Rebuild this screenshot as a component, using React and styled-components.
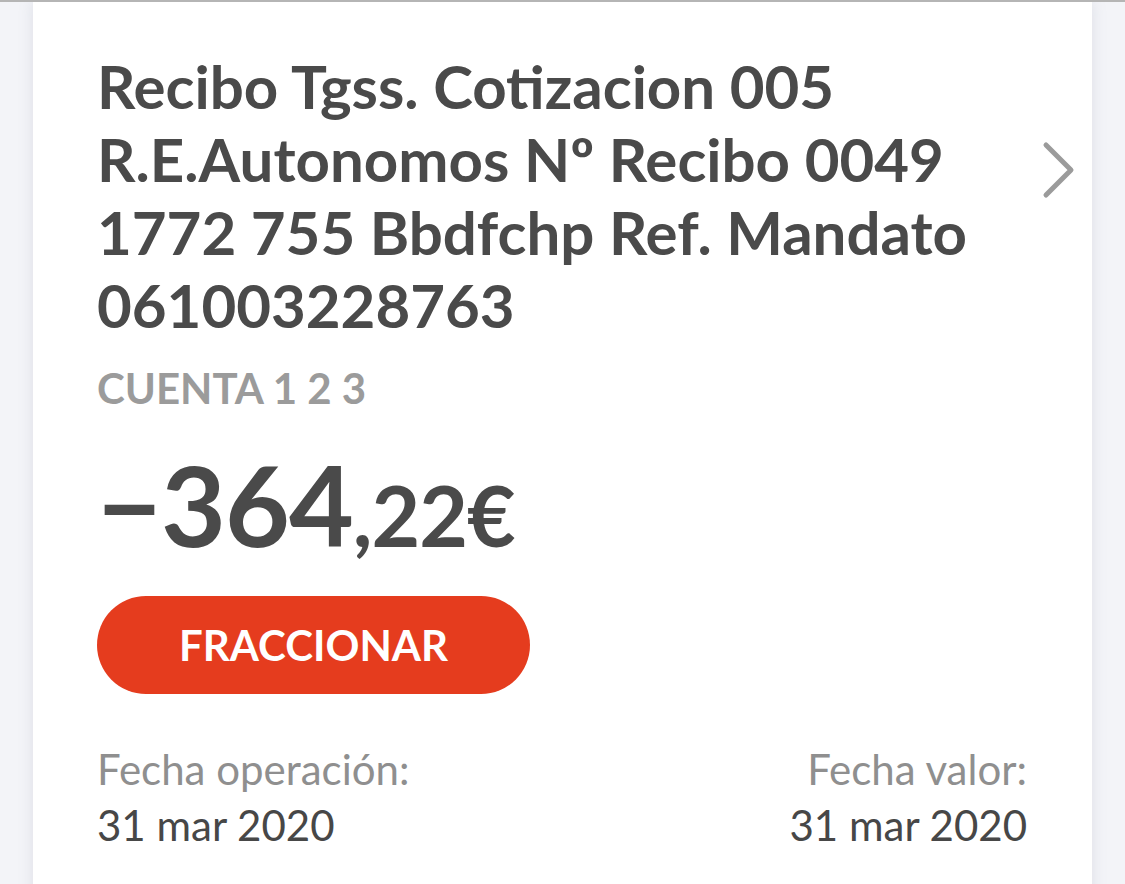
import React from "react"
import styled, { createGlobalStyle } from "styled-components"

const GlobalStyle = createGlobalStyle`
  html, body {
    margin: 0;
    padding: 0;
    background: #f3f4f8;
    font-family: Lato, "Open Sans", sans-serif;
  }
`

const Page = styled.div`
  min-height: 884px;
  border-top: 2px solid #b5b5b5;
  padding: 0 33px;
  box-sizing: border-box;
  overflow: hidden;
`

const Card = styled.div`
  background: #ffffff;
  min-height: 900px;
  padding: 48px 65px 0 64px;
  box-shadow: 0 0 14px rgba(120, 125, 150, 0.18);
`

const Header = styled.div`
  display: flex;
  align-items: flex-start;
  margin-right: -50px;
`

const Title = styled.h1`
  flex: 1;
  margin: 0;
  font-size: 60px;
  line-height: 73px;
  font-weight: 700;
  color: #4a4a4a;
  max-width: 920px;
`

const Chevron = styled.svg`
  flex: none;
  width: 36px;
  height: 60px;
  margin-top: 90px;
  margin-left: auto;
`

const Account = styled.div`
  margin-top: 21px;
  font-size: 42px;
  line-height: 50px;
  font-weight: 700;
  color: #9b9b9b;
`

const Amount = styled.div`
  margin-top: 35px;
  font-size: 112px;
  line-height: 112px;
  font-weight: 700;
  color: #4a4a4a;
  letter-spacing: -1px;
`

const Cents = styled.span`
  font-size: 84px;
  letter-spacing: -1px;
`

const Button = styled.button`
  display: flex;
  align-items: center;
  justify-content: center;
  margin-top: 25px;
  width: 433px;
  height: 98px;
  border: none;
  border-radius: 49px;
  background: #e53c1e;
  color: #ffffff;
  font-family: inherit;
  font-size: 42px;
  font-weight: 700;
  padding: 0;
`

const Dates = styled.div`
  display: flex;
  justify-content: space-between;
  margin-top: 47px;
`

const DateBlock = styled.div`
  text-align: ${(p) => (p.$right ? "right" : "left")};
  font-size: 42px;
  line-height: 56px;
`

const Label = styled.div`
  color: #8f8f8f;
`

const Value = styled.div`
  color: #474747;
`

const App = () => {
  return (
    <>
      <GlobalStyle />
      <Page>
        <Card>
          <Header>
            <Title>
              Recibo Tgss. Cotizacion 005 R.E.Autonomos Nº Recibo 0049 1772 755
              Bbdfchp Ref. Mandato 061003228763
            </Title>
            <Chevron viewBox="0 0 36 60">
              <polyline
                points="5,5 30,30 5,55"
                fill="none"
                stroke="#9b9b9b"
                strokeWidth="5"
                strokeLinecap="round"
                strokeLinejoin="round"
              />
            </Chevron>
          </Header>
          <Account>CUENTA 1 2 3</Account>
          <Amount>
            −364<Cents>,22€</Cents>
          </Amount>
          <Button>FRACCIONAR</Button>
          <Dates>
            <DateBlock>
              <Label>Fecha operación:</Label>
              <Value>31 mar 2020</Value>
            </DateBlock>
            <DateBlock $right>
              <Label>Fecha valor:</Label>
              <Value>31 mar 2020</Value>
            </DateBlock>
          </Dates>
        </Card>
      </Page>
    </>
  )
}

export default App
